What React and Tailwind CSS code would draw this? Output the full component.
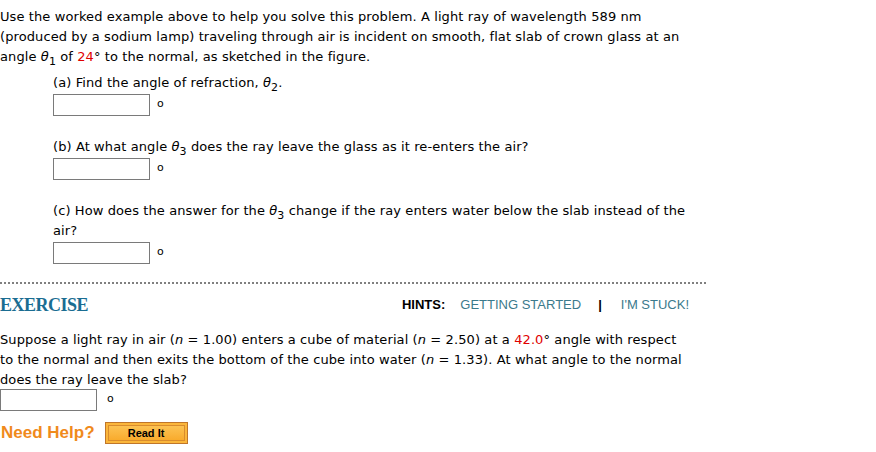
import React from 'react';

const Theta = ({ sub }) => (
  <span>
    <i>θ</i>
    <sub className="text-[11px] leading-none align-[-1px]">{sub}</sub>
  </span>
);

const Answer = ({ className = '' }) => (
  <div className={`flex items-start gap-[7px] ${className}`}>
    <div className="w-[97px] h-[22px] border border-[#7a7a7a] bg-white" />
    <span className="text-[11px] leading-[13px] mt-[3px]">o</span>
  </div>
);

export default function App() {
  return (
    <div className="w-[876px] h-[452px] bg-white text-black text-[13px] leading-[20px] tracking-[0.1px]" style={{ fontFamily: '"DejaVu Sans", Verdana, sans-serif' }}>
      <div className="pt-[7px] whitespace-nowrap">
        <p>
          Use the worked example above to help you solve this problem. A light ray of wavelength 589 nm<br />
          (produced by a sodium lamp) traveling through air is incident on smooth, flat slab of crown glass at an<br />
          angle <Theta sub="1" /> of <span className="text-[#e00000]">24</span>° to the normal, as sketched in the figure.
        </p>

        <div className="pl-[53px] pt-[6px]">
          <p>(a) Find the angle of refraction, <Theta sub="2" />.</p>
          <Answer className="mt-[1px]" />

          <p className="mt-[21px]">(b) At what angle <Theta sub="3" /> does the ray leave the glass as it re-enters the air?</p>
          <Answer className="mt-[1px]" />

          <p className="mt-[21px]">
            (c) How does the answer for the <Theta sub="3" /> change if the ray enters water below the slab instead of the<br />
            air?
          </p>
          <Answer className="mt-[1px]" />
        </div>
      </div>

      <div className="w-[706px] mt-[18px] border-t-2 border-dotted border-[#808080]" />

      <div className="w-[706px] flex items-center justify-between mt-[11px] tracking-normal">
        <span className="text-[18px] font-bold text-[#1a6d92] tracking-[-0.5px]" style={{ fontFamily: '"Liberation Serif", serif' }}>EXERCISE</span>
        <div className="flex items-center text-[13px] pr-[17px]" style={{ fontFamily: '"Liberation Sans", Arial, sans-serif' }}>
          <span className="font-bold">HINTS:</span>
          <span className="ml-[15px] text-[#3b7a8c]">GETTING STARTED</span>
          <span className="ml-[17px] font-bold">|</span>
          <span className="ml-[19px] text-[#3b7a8c]">I'M STUCK!</span>
        </div>
      </div>

      <p className="mt-[15px] whitespace-nowrap">
        Suppose a light ray in air (<i>n</i> = 1.00) enters a cube of material (<i>n</i> = 2.50) at a <span className="text-[#e00000]">42.0</span>° angle with respect<br />
        to the normal and then exits the bottom of the cube into water (<i>n</i> = 1.33). At what angle to the normal<br />
        does the ray leave the slab?
      </p>
      <Answer className="gap-[10px] -mt-[1px]" />

      <div className="flex items-center gap-[10px] mt-[11px] tracking-normal" style={{ fontFamily: '"Liberation Sans", Arial, sans-serif' }}>
        <span className="text-[17px] font-bold text-[#f08a1c] ml-[1px]">Need Help?</span>
        <button className="w-[83px] h-[22px] border border-[#c0762a] bg-[#fbb63b] p-[2px]">
          <div className="h-full border border-[#d98c2e] bg-gradient-to-b from-[#fcc251] to-[#f9ab2c] flex items-center justify-center text-[11px] font-bold leading-none">
            Read It
          </div>
        </button>
      </div>
    </div>
  );
}
